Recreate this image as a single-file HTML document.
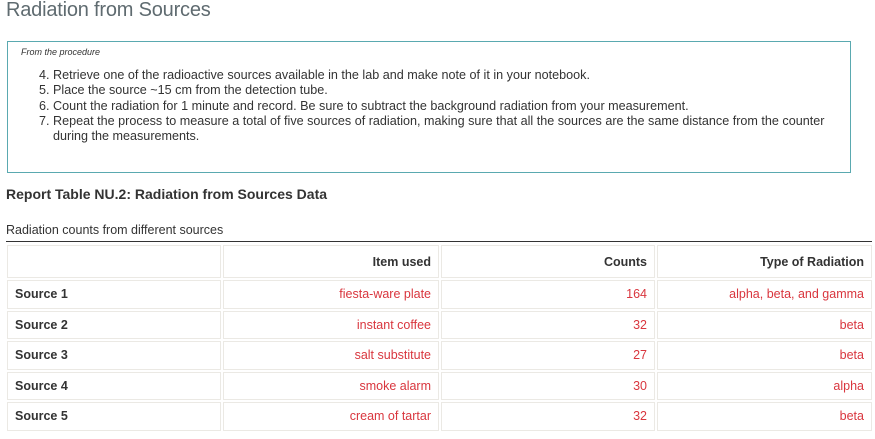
<!DOCTYPE html>
<html><head><style>
body{margin:0;width:875px;height:439px;overflow:hidden;background:#fff;font-family:"Liberation Sans",Arial,sans-serif;color:#333;position:relative}
.t{position:absolute;left:6px;top:-1px;font-size:20px;color:#5f6b70;letter-spacing:-0.2px}
.box{position:absolute;left:7px;top:41px;width:842px;height:130px;border:1px solid #5aa9b0}
.fp{position:absolute;left:13px;top:5px;font-size:9px;font-style:italic;color:#333}
ol{position:absolute;left:0;top:26px;margin:0;padding-left:45px;font-size:12.6px;line-height:15.3px;color:#333;width:790px}
h3{position:absolute;left:6px;top:186px;margin:0;font-size:14px;font-weight:bold;color:#333}
.cap{position:absolute;left:6px;top:223px;font-size:12.5px;color:#333}
.line{position:absolute;left:6px;top:241px;width:866px;height:1px;background:#333}
table{position:absolute;left:5px;top:243px;border-collapse:separate;border-spacing:2px;width:869px;font-size:12.5px;table-layout:fixed}
td{border:1px solid #ebe9e4;text-align:right;padding:0 7px;height:26.5px;color:#d9363e;overflow:hidden;white-space:nowrap}
td:first-child{text-align:left;font-weight:bold;color:#333}
tr.h td{font-weight:bold;color:#333;height:31px}
</style></head><body>
<div class="t">Radiation from Sources</div>
<div class="box"><div class="fp">From the procedure</div>
<ol start="4">
<li>Retrieve one of the radioactive sources available in the lab and make note of it in your notebook.</li>
<li>Place the source ~15 cm from the detection tube.</li>
<li>Count the radiation for 1 minute and record. Be sure to subtract the background radiation from your measurement.</li>
<li>Repeat the process to measure a total of five sources of radiation, making sure that all the sources are the same distance from the counter during the measurements.</li>
</ol></div>
<h3>Report Table NU.2: Radiation from Sources Data</h3>
<div class="cap">Radiation counts from different sources</div>
<div class="line"></div>
<table>
<colgroup><col style="width:214px"><col style="width:216px"><col style="width:214px"><col style="width:215px"></colgroup>
<tr class="h"><td></td><td>Item used</td><td>Counts</td><td>Type of Radiation</td></tr>
<tr><td>Source 1</td><td>fiesta-ware plate</td><td>164</td><td>alpha, beta, and gamma</td></tr>
<tr><td>Source 2</td><td>instant coffee</td><td>32</td><td>beta</td></tr>
<tr><td>Source 3</td><td>salt substitute</td><td>27</td><td>beta</td></tr>
<tr><td>Source 4</td><td>smoke alarm</td><td>30</td><td>alpha</td></tr>
<tr><td>Source 5</td><td>cream of tartar</td><td>32</td><td>beta</td></tr>
</table>
</body></html>
